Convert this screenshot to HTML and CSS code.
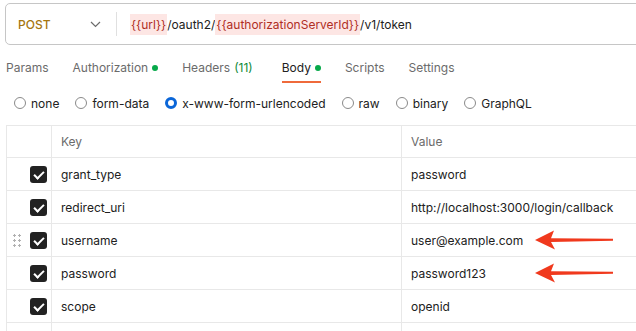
FILE: index.html
```html
<!DOCTYPE html>
<html lang="en">
<head>
    <meta charset="UTF-8">
    <title>POST token request</title>
    <link rel="stylesheet" href="styles.css">
</head>
<body>
    <div class="url-bar">
        <div class="method">
            <span class="method-name">POST</span>
            <svg class="chevron" width="11" height="7" viewBox="0 0 11 7"><path d="M1 1l4.5 4.5L10 1" fill="none" stroke="#6b6b6b" stroke-width="1.2"/></svg>
        </div>
        <div class="url">
            <span class="var">{{url}}</span>/oauth2/<span class="var">{{authorizationServerId}}</span>/v1/token
        </div>
    </div>

    <div class="tabs">
        <span class="tab">Params</span>
        <span class="tab">Authorization <i class="dot"></i></span>
        <span class="tab">Headers <span class="count">(11)</span></span>
        <span class="tab active">Body <i class="dot"></i></span>
        <span class="tab">Scripts</span>
        <span class="tab">Settings</span>
    </div>

    <div class="body-types">
        <label class="radio"><i class="circle"></i>none</label>
        <label class="radio"><i class="circle"></i>form-data</label>
        <label class="radio"><i class="circle checked"></i>x-www-form-urlencoded</label>
        <label class="radio"><i class="circle"></i>raw</label>
        <label class="radio"><i class="circle"></i>binary</label>
        <label class="radio"><i class="circle"></i>GraphQL</label>
    </div>

    <div class="table">
        <div class="row head">
            <div class="cell check"></div>
            <div class="cell key">Key</div>
            <div class="cell value">Value</div>
        </div>
        <div class="row">
            <div class="cell check"><span class="box"></span></div>
            <div class="cell key">grant_type</div>
            <div class="cell value">password</div>
        </div>
        <div class="row">
            <div class="cell check"><span class="box"></span></div>
            <div class="cell key">redirect_uri</div>
            <div class="cell value">http://localhost:3000/login/callback</div>
        </div>
        <div class="row">
            <div class="cell check"><span class="grip"></span><span class="box"></span></div>
            <div class="cell key">username</div>
            <div class="cell value">user@example.com<svg class="arrow" width="80" height="22" viewBox="0 0 80 22"><path d="M0 11 L19 1.5 L16 9.3 L78 9.8 L78 11.8 L16 13 L20 20.5 Z" fill="#f0391d"/></svg></div>
        </div>
        <div class="row">
            <div class="cell check"><span class="box"></span></div>
            <div class="cell key">password</div>
            <div class="cell value">password123<svg class="arrow" width="80" height="22" viewBox="0 0 80 22"><path d="M0 11 L19 1.5 L16 9.3 L78 9.8 L78 11.8 L16 13 L20 20.5 Z" fill="#f0391d"/></svg></div>
        </div>
        <div class="row">
            <div class="cell check"><span class="box"></span></div>
            <div class="cell key">scope</div>
            <div class="cell value">openid</div>
        </div>
        <div class="row last">
            <div class="cell check"></div>
            <div class="cell key"></div>
            <div class="cell value"></div>
        </div>
    </div>
</body>
</html>
```

FILE: styles.css
```css
* {
    margin: 0;
    padding: 0;
    box-sizing: border-box;
}

body {
    font-family: Inter, "Noto Sans", sans-serif;
    font-size: 12px;
    color: #212121;
    background: #fff;
    overflow: hidden;
    width: 636px;
    height: 331px;
}

.url-bar {
    display: flex;
    align-items: center;
    width: 660px;
    height: 42px;
    margin: 3px 0 0 5px;
    border: 1px solid #c6c6c6;
    border-radius: 5px;
}

.method {
    display: flex;
    align-items: center;
    justify-content: space-between;
    width: 111px;
    height: 24px;
    padding: 0 15px 0 12px;
    border-right: 1px solid #e0e0e0;
}

.method-name {
    color: #a5760e;
    font-weight: 500;
}

.url {
    padding-left: 13px;
    white-space: nowrap;
}

.var {
    color: #b02e24;
    background: #fde6e4;
    padding: 3px 1px;
}

.tabs {
    display: flex;
    gap: 24px;
    height: 38px;
    padding: 15px 0 0 6px;
    color: #6b6b6b;
}

.tab {
    display: flex;
    align-items: flex-start;
    gap: 4px;
    height: 23px;
}

.tab.active {
    margin-left: 5px;
    color: #212121;
    border-bottom: 2px solid #ef6a3b;
}

.count {
    color: #0e8a3a;
}

.dot {
    width: 6px;
    height: 6px;
    margin-top: 5px;
    border-radius: 50%;
    background: #07a94a;
}

.body-types {
    display: flex;
    align-items: center;
    gap: 16px;
    height: 42px;
    padding: 0 0 2px 14px;
}

.radio {
    display: flex;
    align-items: center;
    gap: 5px;
}

.circle {
    width: 12px;
    height: 12px;
    border: 1px solid #8a8a8a;
    border-radius: 50%;
}

.circle.checked {
    border: 3.5px solid #0a66d8;
}

.table {
    width: 660px;
    margin-left: 6px;
    border-left: 1px solid #e8e8e8;
    border-top: 1px solid #e8e8e8;
}

.row {
    position: relative;
    display: flex;
    height: 33px;
    border-bottom: 1px solid #e8e8e8;
}

.row.head {
    height: 32px;
}

.cell {
    display: flex;
    align-items: center;
}

.check {
    position: relative;
    justify-content: flex-end;
    width: 45px;
    padding-right: 4px;
    border-right: 1px solid #e8e8e8;
}

.key {
    width: 350px;
    padding-left: 9px;
    border-right: 1px solid #e8e8e8;
}

.value {
    flex: 1;
    padding-left: 9px;
}

.head .key,
.head .value {
    color: #6b6b6b;
}

.box {
    width: 17px;
    height: 17px;
    border-radius: 3px;
    background: #222;
    position: relative;
}

.box::after {
    content: "";
    position: absolute;
    left: 6px;
    top: 3px;
    width: 4px;
    height: 8px;
    border: solid #fff;
    border-width: 0 2px 2px 0;
    transform: rotate(45deg);
}

.grip {
    position: absolute;
    left: 5px;
    top: 9px;
    width: 9px;
    height: 14px;
    background: radial-gradient(circle, #b0b0b0 1px, transparent 1.3px) 0 0 / 5px 5px;
}

.arrow {
    position: absolute;
    left: 528px;
    top: 5px;
}
```
